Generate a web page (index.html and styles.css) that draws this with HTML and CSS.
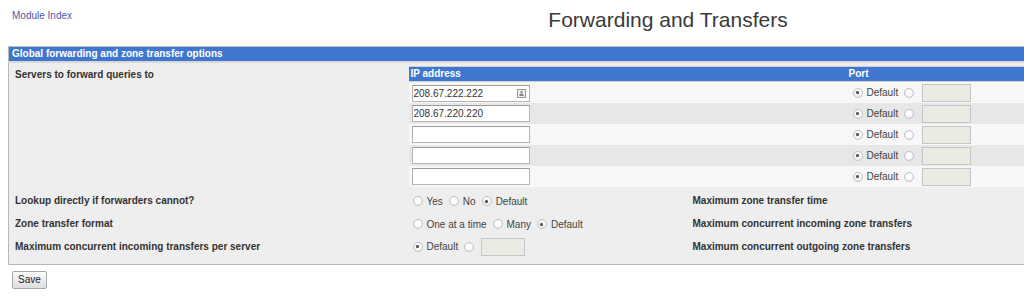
FILE: index.html
```html
<!DOCTYPE html>
<html>
<head>
<meta charset="utf-8">
<link rel="stylesheet" href="styles.css">
</head>
<body>
<div class="page">
  <div class="topbar">
    <a class="modlink" href="#">Module Index</a>
    <h1 class="title">Forwarding and Transfers</h1>
  </div>
  <table class="main">
    <colgroup><col class="w1"><col class="w2"><col class="w3"><col class="w4"></colgroup>
    <tr><th class="mainhead" colspan="4">Global forwarding and zone transfer options</th></tr>
    <tr class="fwdrow">
      <td class="lbl c1">Servers to forward queries to</td>
      <td colspan="3" class="fwdcell">
        <table class="inner">
          <colgroup><col class="iw1"><col class="iw2"></colgroup>
          <tr class="ihead"><th>IP address</th><th>Port</th></tr>
          <tr class="odd">
            <td><span class="inwrap"><input class="ip" type="text" value="208.67.222.222"><span class="keyicon"><svg width="9" height="9" viewBox="0 0 9 9"><rect x="0.5" y="0.5" width="8" height="8" fill="#eee" stroke="#999"/><rect x="3.5" y="2" width="2" height="2.5" fill="#888"/><rect x="2.5" y="5" width="4" height="2" fill="#888"/></svg></span></span></td>
            <td class="pcell"><span class="radio on"></span><span class="rl">Default</span><span class="radio"></span><input class="port" type="text" disabled></td>
          </tr>
          <tr class="even">
            <td><input class="ip" type="text" value="208.67.220.220"></td>
            <td class="pcell"><span class="radio on"></span><span class="rl">Default</span><span class="radio"></span><input class="port" type="text" disabled></td>
          </tr>
          <tr class="odd">
            <td><input class="ip" type="text"></td>
            <td class="pcell"><span class="radio on"></span><span class="rl">Default</span><span class="radio"></span><input class="port" type="text" disabled></td>
          </tr>
          <tr class="even">
            <td><input class="ip" type="text"></td>
            <td class="pcell"><span class="radio on"></span><span class="rl">Default</span><span class="radio"></span><input class="port" type="text" disabled></td>
          </tr>
          <tr class="odd">
            <td><input class="ip" type="text"></td>
            <td class="pcell"><span class="radio on"></span><span class="rl">Default</span><span class="radio"></span><input class="port" type="text" disabled></td>
          </tr>
        </table>
      </td>
    </tr>
    <tr class="opt first">
      <td class="lbl c1">Lookup directly if forwarders cannot?</td>
      <td class="c2"><span class="radio"></span><span class="rl">Yes</span><span class="radio"></span><span class="rl">No</span><span class="radio on"></span><span class="rl">Default</span></td>
      <td class="lbl c3">Maximum zone transfer time</td>
      <td class="c4"></td>
    </tr>
    <tr class="opt">
      <td class="lbl c1">Zone transfer format</td>
      <td class="c2"><span class="radio"></span><span class="rl">One at a time</span><span class="radio"></span><span class="rl">Many</span><span class="radio on"></span><span class="rl">Default</span></td>
      <td class="lbl c3">Maximum concurrent incoming zone transfers</td>
      <td class="c4"></td>
    </tr>
    <tr class="opt last">
      <td class="lbl c1">Maximum concurrent incoming transfers per server</td>
      <td class="c2"><span class="radio on"></span><span class="rl">Default</span><span class="radio"></span><input class="port small" type="text" disabled></td>
      <td class="lbl c3">Maximum concurrent outgoing zone transfers</td>
      <td class="c4"></td>
    </tr>
  </table>
  <div class="actions"><button class="save" type="button">Save</button></div>
</div>
</body>
</html>
```
FILE: styles.css
```css
html, body {
  margin: 0;
  padding: 0;
  background: #fff;
}
body {
  font-family: "Liberation Sans", Arial, sans-serif;
  color: #333;
  overflow: hidden;
}
.page {
  width: 1320px;
  padding: 0 8px;
}
.topbar {
  position: relative;
  height: 46px;
}
.modlink {
  position: absolute;
  left: 4px;
  top: 10px;
  font-size: 10px;
  color: #5454a8;
  text-decoration: none;
}
.title {
  margin: 0;
  padding-top: 8px;
  text-align: center;
  font-size: 21px;
  font-weight: normal;
  color: #3a3a3a;
}
.main {
  width: 1320px;
  border-collapse: collapse;
  border: 1px solid #b9b9b9;
  background: #eee;
  table-layout: fixed;
}
.w1 { width: 400px; }
.w2 { width: 280px; }
.w3 { width: 400px; }
.w4 { width: 240px; }
.main td, .main th {
  padding: 0;
}
.mainhead {
  background: #3f77d0;
  color: #fff;
  font-size: 10px;
  font-weight: bold;
  text-align: left;
  height: 14px;
  padding: 0 0 0 3px !important;
  border-bottom: 2px solid #d8d8d8;
  line-height: 14px;
}
.lbl {
  font-size: 10px;
  font-weight: bold;
  color: #333;
}
.c1 {
  padding-left: 6px !important;
}
.c3 {
  padding-left: 4px !important;
}
.fwdrow .c1 {
  vertical-align: top;
  padding-top: 6px !important;
}
.fwdcell {
  padding-top: 3px !important;
  vertical-align: top;
}
.inner {
  width: 920px;
  border-collapse: collapse;
  table-layout: fixed;
}
.iw1 { width: 438px; }
.iw2 { width: 482px; }
.inner th {
  background: #3f77d0;
  color: #fff;
  font-size: 10px;
  font-weight: bold;
  text-align: left;
  height: 14px;
  line-height: 14px;
  padding: 0 0 0 2px;
  border-top: 1px solid #d0d0d0;
  border-bottom: 1px solid #d0d0d0;
}
.inner td {
  height: 21px;
  padding: 0 0 0 3px;
  vertical-align: middle;
}
.inner tr.odd td {
  background: #f7f7f7;
}
.inner tr.even td {
  background: #e7e7e7;
}
.inwrap {
  position: relative;
  display: inline-block;
}
input.ip {
  box-sizing: border-box;
  width: 118px;
  height: 17px;
  margin: 0;
  padding: 0 1px;
  border: 1px solid #b4b4b4;
  border-top-color: #9a9a9a;
  background: #fff;
  font-family: "Liberation Sans", Arial, sans-serif;
  font-size: 10px;
  color: #333;
  display: block;
}
.keyicon {
  position: absolute;
  right: 4px;
  top: 4px;
  width: 9px;
  height: 9px;
  line-height: 0;
}
.pcell {
  padding-left: 6px !important;
  white-space: nowrap;
}
.radio {
  display: inline-block;
  box-sizing: border-box;
  width: 10px;
  height: 10px;
  border-radius: 50%;
  border: 1px solid #c2c2c2;
  background: radial-gradient(circle at 50% 40%, #fff 30%, #e4e4e4 100%);
  vertical-align: middle;
  position: relative;
  margin-right: 4px;
}
.radio.on::after {
  content: "";
  position: absolute;
  left: 2.5px;
  top: 2.5px;
  width: 3px;
  height: 3px;
  border-radius: 50%;
  background: #555;
  box-shadow: 0 0 1px #777;
}
.rl {
  font-size: 10px;
  color: #444;
  vertical-align: middle;
  margin-right: 6px;
}
input.port {
  box-sizing: border-box;
  width: 49px;
  height: 18px;
  margin: 0 0 0 4px;
  border: 1px solid #c6c6c6;
  background: #ebebe4;
  vertical-align: middle;
  padding: 0;
}
input.port.small {
  width: 44px;
  margin-left: 3px;
}
.opt td {
  height: 23px;
  vertical-align: middle;
}
.opt.first td {
  padding-top: 2px;
}
.opt.last td {
  padding-bottom: 6px;
}
.opt .c2 {
  padding-left: 4px;
  white-space: nowrap;
}
.actions {
  padding: 4px 0 0 4px;
}
.save {
  font-family: "Liberation Sans", Arial, sans-serif;
  font-size: 10px;
  color: #222;
  height: 18px;
  padding: 0 5px;
  border: 1px solid #a8a8a8;
  border-radius: 2px;
  background: linear-gradient(#fbfbfb, #dedede);
}
```
